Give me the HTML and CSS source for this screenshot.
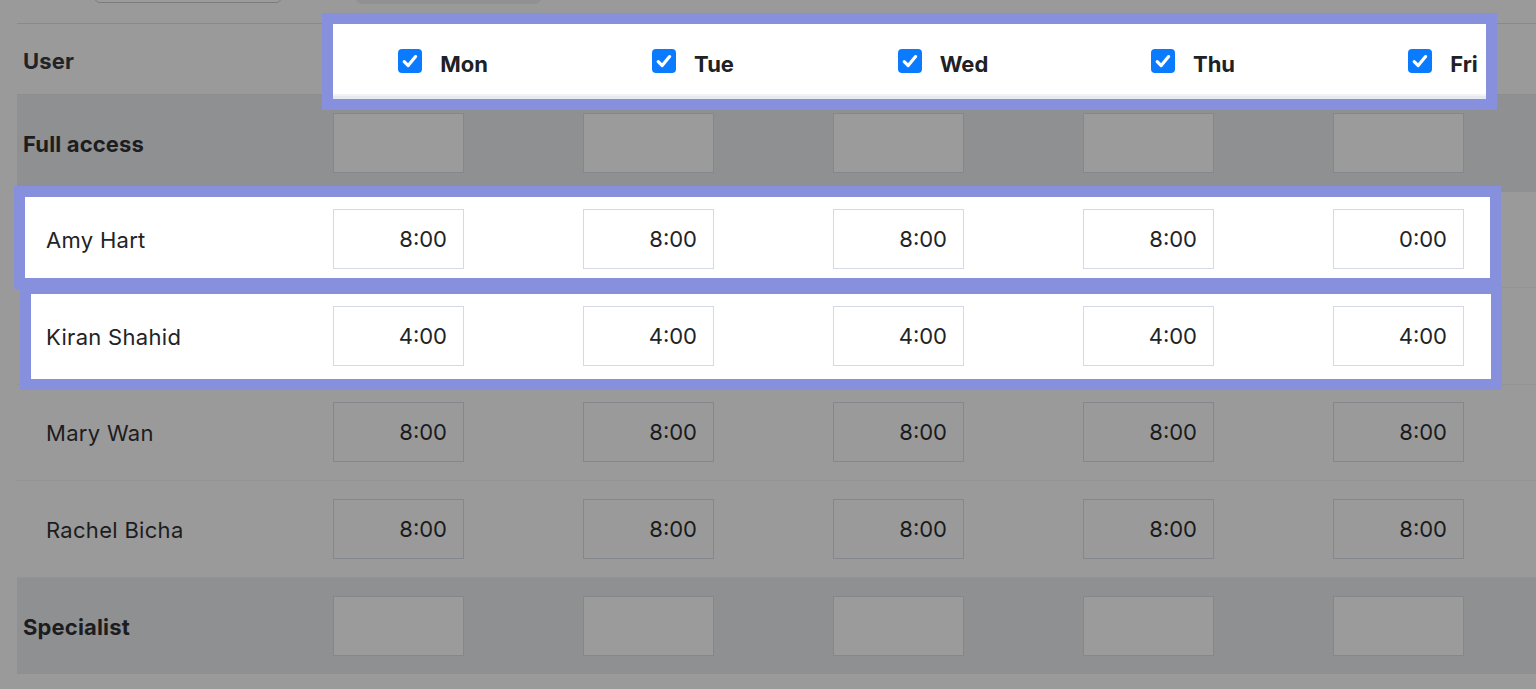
FILE: index.html
```html
<!DOCTYPE html>
<html lang="en">
<head>
<meta charset="utf-8">
<title>Working hours</title>
<link rel="stylesheet" href="styles.css">
</head>
<body>
<div class="toolbar">
  <span class="tb-btn tb-outline"></span>
  <span class="tb-btn tb-filled"></span>
</div>
<div class="table">
  <div class="row head spot spot-head">
    <div class="name group">User</div>
    <div class="day"><span class="ck"><svg viewBox="0 0 24 24"><path d="M6.2 12.6 L10.2 16.6 L17.6 7.6"/></svg></span><span class="day-label">Mon</span></div>
    <div class="day"><span class="ck"><svg viewBox="0 0 24 24"><path d="M6.2 12.6 L10.2 16.6 L17.6 7.6"/></svg></span><span class="day-label">Tue</span></div>
    <div class="day"><span class="ck"><svg viewBox="0 0 24 24"><path d="M6.2 12.6 L10.2 16.6 L17.6 7.6"/></svg></span><span class="day-label">Wed</span></div>
    <div class="day"><span class="ck"><svg viewBox="0 0 24 24"><path d="M6.2 12.6 L10.2 16.6 L17.6 7.6"/></svg></span><span class="day-label">Thu</span></div>
    <div class="day"><span class="ck"><svg viewBox="0 0 24 24"><path d="M6.2 12.6 L10.2 16.6 L17.6 7.6"/></svg></span><span class="day-label">Fri</span></div>
  </div>

  <div class="row grp">
    <div class="name group">Full access</div>
    <div class="cell"><input class="hrs" type="text" value=""></div>
    <div class="cell"><input class="hrs" type="text" value=""></div>
    <div class="cell"><input class="hrs" type="text" value=""></div>
    <div class="cell"><input class="hrs" type="text" value=""></div>
    <div class="cell"><input class="hrs" type="text" value=""></div>
  </div>

  <div class="row user spot spot-a">
    <div class="name">Amy Hart</div>
    <div class="cell"><input class="hrs" type="text" value="8:00"></div>
    <div class="cell"><input class="hrs" type="text" value="8:00"></div>
    <div class="cell"><input class="hrs" type="text" value="8:00"></div>
    <div class="cell"><input class="hrs" type="text" value="8:00"></div>
    <div class="cell"><input class="hrs" type="text" value="0:00"></div>
  </div>

  <div class="row user spot spot-b">
    <div class="name">Kiran Shahid</div>
    <div class="cell"><input class="hrs" type="text" value="4:00"></div>
    <div class="cell"><input class="hrs" type="text" value="4:00"></div>
    <div class="cell"><input class="hrs" type="text" value="4:00"></div>
    <div class="cell"><input class="hrs" type="text" value="4:00"></div>
    <div class="cell"><input class="hrs" type="text" value="4:00"></div>
  </div>

  <div class="row user">
    <div class="name">Mary Wan</div>
    <div class="cell"><input class="hrs" type="text" value="8:00"></div>
    <div class="cell"><input class="hrs" type="text" value="8:00"></div>
    <div class="cell"><input class="hrs" type="text" value="8:00"></div>
    <div class="cell"><input class="hrs" type="text" value="8:00"></div>
    <div class="cell"><input class="hrs" type="text" value="8:00"></div>
  </div>

  <div class="row user">
    <div class="name">Rachel Bicha</div>
    <div class="cell"><input class="hrs" type="text" value="8:00"></div>
    <div class="cell"><input class="hrs" type="text" value="8:00"></div>
    <div class="cell"><input class="hrs" type="text" value="8:00"></div>
    <div class="cell"><input class="hrs" type="text" value="8:00"></div>
    <div class="cell"><input class="hrs" type="text" value="8:00"></div>
  </div>

  <div class="row grp">
    <div class="name group">Specialist</div>
    <div class="cell"><input class="hrs" type="text" value=""></div>
    <div class="cell"><input class="hrs" type="text" value=""></div>
    <div class="cell"><input class="hrs" type="text" value=""></div>
    <div class="cell"><input class="hrs" type="text" value=""></div>
    <div class="cell"><input class="hrs" type="text" value=""></div>
  </div>
</div>
</body>
</html>
```

FILE: styles.css
```css
html, body {
  margin: 0;
  padding: 0;
}

body {
  background: #9a9a9a;
  font-family: Inter, "Noto Sans", "Liberation Sans", sans-serif;
  color: #1c1c1e;
  overflow: hidden;
  height: 689px;
}

/* partially visible toolbar above the table */
.toolbar {
  height: 23px;
  display: flex;
  align-items: flex-start;
  gap: 74px;
  padding-left: 94px;
  overflow: hidden;
}

.tb-btn {
  display: block;
  height: 28px;
  margin-top: -25px;
  border-radius: 6px;
  box-sizing: border-box;
}

.tb-outline {
  width: 188px;
  border: 1px solid #7b7c7f;
  background: #9b9b9b;
}

.tb-filled {
  width: 185px;
  background: #909193;
  margin-top: -24px;
}

/* table */
.table {
  margin-left: 17px;
  width: 1551px;
  border-top: 1px solid #8a8a8b;
}

.row {
  display: grid;
  grid-template-columns: 301px repeat(5, 250px);
  align-items: center;
  box-sizing: border-box;
  height: 96.5px;
}

.row.head {
  height: 71px;
  border-bottom: 1px solid #8c8d8f;
}

.row.head .name {
  padding-top: 3px;
}

.row.user {
  border-bottom: 1px solid #939393;
}

.row.grp {
  background: #8f9092;
}

.name {
  font-size: 22px;
  line-height: 26px;
  letter-spacing: 0.3px;
  padding-left: 29px;
  padding-top: 2px;
  color: #1d1d1f;
  white-space: nowrap;
}

.name.group {
  font-weight: 700;
  letter-spacing: 0.15px;
  padding-left: 6px;
}

.cell {
  padding-left: 15px;
}

.hrs {
  display: block;
  box-sizing: border-box;
  width: 131px;
  height: 60px;
  margin: 0;
  padding: 0 16px 0 8px;
  border: 1px solid #84878b;
  border-radius: 0;
  background: #9b9b9b;
  font-family: Inter, "Noto Sans", "Liberation Sans", sans-serif;
  font-size: 22px;
  color: #1b1b1c;
  text-align: right;
  outline: none;
}

.row.user .hrs {
  background: #9a9a9a;
}

/* header day cells */
.day {
  display: flex;
  align-items: center;
  justify-content: center;
  gap: 18px;
  padding-top: 3px;
}

.ck {
  display: block;
  width: 24px;
  height: 24px;
  border-radius: 4px;
  background: #0a7bff;
}

.ck svg {
  display: block;
  width: 24px;
  height: 24px;
  fill: none;
  stroke: #fff;
  stroke-width: 3.2;
  stroke-linecap: round;
  stroke-linejoin: round;
}

.day-label {
  font-size: 22px;
  font-weight: 700;
  line-height: 26px;
  margin-top: 7px;
  color: #202124;
}

/* spotlight highlights drawn over the dimmed page */
.spot {
  position: relative;
  z-index: 1;
}

.spot::before {
  content: "";
  position: absolute;
  background: #ffffff;
  box-shadow: 0 0 0 11px #8790dc;
  z-index: -1;
}

.spot-head::before {
  left: 316px;
  top: 0;
  width: 1153px;
  height: 75px;
  box-shadow: inset 0 -3px 0 #e6e9f0, inset 0 -5px 0 #f1f3f7, 0 0 0 11px #8790dc;
}

.spot-a::before {
  left: 8px;
  top: 5.5px;
  width: 1465px;
  height: 81px;
}

.spot-b::before {
  left: 14px;
  top: 6px;
  width: 1460px;
  height: 85px;
}

.spot .hrs {
  background: #ffffff;
  border-color: #d3d9e6;
  color: #222326;
}

.row.spot.user .hrs {
  background: #ffffff;
}

.spot .name {
  color: #222326;
}
```
